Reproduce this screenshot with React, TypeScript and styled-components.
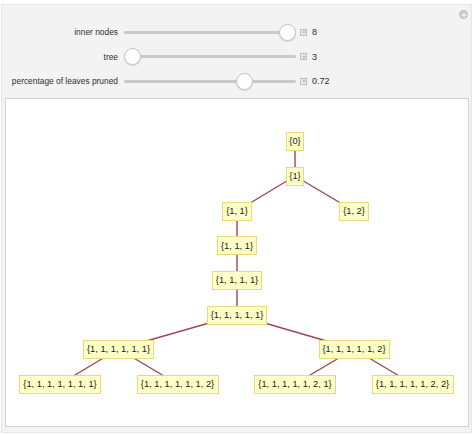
import React from "react";
import styled, { createGlobalStyle } from "styled-components";

const Global = createGlobalStyle`
  html, body { margin: 0; padding: 0; background: #ffffff; }
  body { font-family: "Liberation Sans", Arial, sans-serif; }
`;

const Panel = styled.div`
  box-sizing: border-box;
  position: relative;
  margin: 4px 0 0 1px;
  width: 471px;
  height: 429px;
  background: #f3f3f3;
  border: 1px solid #e6e6e6;
  padding-top: 15px;
`;

const CornerButton = styled.div`
  position: absolute;
  top: 5px;
  right: 3px;
  width: 9px;
  height: 9px;
  border-radius: 50%;
  background: #c6c6c6;
  &::before, &::after {
    content: "";
    position: absolute;
    background: #ffffff;
    left: 50%;
    top: 50%;
    transform: translate(-50%, -50%);
  }
  &::before { width: 5px; height: 1px; }
  &::after { width: 1px; height: 5px; }
`;

const Controls = styled.div`
  display: flex;
  flex-direction: column;
`;

const Row = styled.div`
  display: flex;
  align-items: center;
  height: 24.5px;
`;

const Label = styled.div`
  width: 116px;
  text-align: right;
  font-size: 8.4px;
  color: #2e2e2e;
  white-space: nowrap;
  margin-right: 6px;
`;

const Track = styled.div`
  position: relative;
  width: 172px;
  height: 17px;
  &::before {
    content: "";
    position: absolute;
    left: 0;
    right: 0;
    top: 7px;
    height: 3px;
    border-radius: 2px;
    background: #c9c9c9;
  }
`;

const Thumb = styled.div`
  position: absolute;
  top: 0;
  box-sizing: border-box;
  width: 17px;
  height: 17px;
  border-radius: 50%;
  background: #ffffff;
  border: 1px solid #c4c4c4;
  box-shadow: 0 1px 1px rgba(0, 0, 0, 0.12);
`;

const PlusBox = styled.div`
  position: relative;
  box-sizing: border-box;
  width: 7px;
  height: 7px;
  margin-left: 4px;
  border: 1px solid #bdbdbd;
  background: #ececec;
  &::before, &::after {
    content: "";
    position: absolute;
    background: #b0b0b0;
    left: 50%;
    top: 50%;
    transform: translate(-50%, -50%);
  }
  &::before { width: 3px; height: 1px; }
  &::after { width: 1px; height: 3px; }
`;

const Value = styled.div`
  margin-left: 5px;
  font-size: 9px;
  color: #2e2e2e;
`;

const Canvas = styled.div`
  position: relative;
  box-sizing: border-box;
  margin: 4.5px 2px 0 3px;
  height: 329px;
  background: #ffffff;
  border: 1px solid #d2d2d2;
`;

const Edges = styled.svg`
  position: absolute;
  left: 0;
  top: 0;
  width: 100%;
  height: 100%;
`;

const Node = styled.div<{ $x: number; $y: number; $w: number }>`
  position: absolute;
  left: ${(p) => p.$x - p.$w / 2}px;
  top: ${(p) => p.$y - 9.5}px;
  width: ${(p) => p.$w}px;
  height: 19px;
  box-sizing: border-box;
  background: #ffffc8;
  border: 1px solid #ebd878;
  display: flex;
  align-items: center;
  justify-content: center;
  font-size: 9.3px;
  color: #1a1a1a;
  white-space: nowrap;
`;

type N = { id: string; label: string; x: number; y: number; w: number };

const nodes: N[] = [
  { id: "A", label: "{0}", x: 289, y: 42, w: 18 },
  { id: "B", label: "{1}", x: 289, y: 77, w: 18 },
  { id: "C", label: "{1, 1}", x: 231, y: 112, w: 30 },
  { id: "D", label: "{1, 2}", x: 348, y: 112, w: 30 },
  { id: "E", label: "{1, 1, 1}", x: 231, y: 146.5, w: 40 },
  { id: "F", label: "{1, 1, 1, 1}", x: 231, y: 181, w: 50 },
  { id: "G", label: "{1, 1, 1, 1, 1}", x: 231, y: 216, w: 60 },
  { id: "H", label: "{1, 1, 1, 1, 1, 1}", x: 112.5, y: 250, w: 71 },
  { id: "I", label: "{1, 1, 1, 1, 1, 2}", x: 348, y: 250, w: 71 },
  { id: "J", label: "{1, 1, 1, 1, 1, 1, 1}", x: 54, y: 285, w: 82 },
  { id: "K", label: "{1, 1, 1, 1, 1, 1, 2}", x: 171.5, y: 285, w: 82 },
  { id: "L", label: "{1, 1, 1, 1, 1, 2, 1}", x: 289, y: 285, w: 82 },
  { id: "M", label: "{1, 1, 1, 1, 1, 2, 2}", x: 406.5, y: 285, w: 82 },
];

const edges: [string, string][] = [
  ["A", "B"], ["B", "C"], ["B", "D"], ["C", "E"], ["E", "F"], ["F", "G"],
  ["G", "H"], ["G", "I"], ["H", "J"], ["H", "K"], ["I", "L"], ["I", "M"],
];

const sliders = [
  { label: "inner nodes", frac: 1, value: "8" },
  { label: "tree", frac: 0, value: "3" },
  { label: "percentage of leaves pruned", frac: 0.72, value: "0.72" },
];

export default function App() {
  const byId = Object.fromEntries(nodes.map((n) => [n.id, n]));
  return (
    <>
      <Global />
      <Panel>
        <CornerButton />
        <Controls>
          {sliders.map((s) => (
            <Row key={s.label}>
              <Label>{s.label}</Label>
              <Track>
                <Thumb style={{ left: s.frac * (172 - 17) }} />
              </Track>
              <PlusBox />
              <Value>{s.value}</Value>
            </Row>
          ))}
        </Controls>
        <Canvas>
          <Edges>
            {edges.map(([a, b]) => (
              <line
                key={a + b}
                x1={byId[a].x}
                y1={byId[a].y}
                x2={byId[b].x}
                y2={byId[b].y}
                stroke="#9c4656"
                strokeWidth={1.4}
              />
            ))}
          </Edges>
          {nodes.map((n) => (
            <Node key={n.id} $x={n.x} $y={n.y} $w={n.w}>
              {n.label}
            </Node>
          ))}
        </Canvas>
      </Panel>
    </>
  );
}
